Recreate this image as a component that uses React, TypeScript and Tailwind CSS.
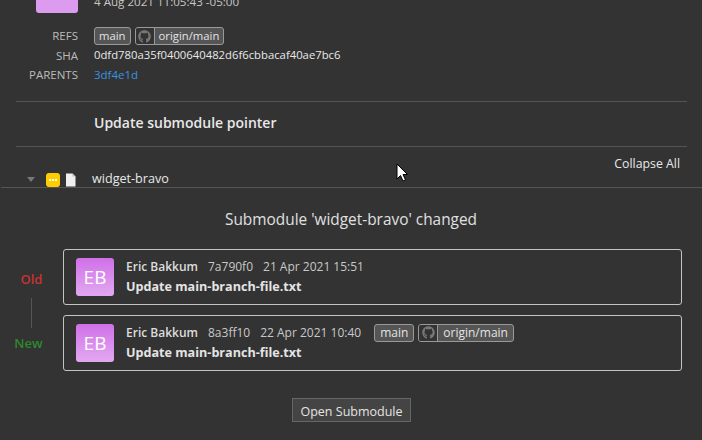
import { FaGithub } from "react-icons/fa"

function Ref({ name, remote, large }: { name: string; remote?: boolean; large?: boolean }) {
	return (
		<span
			className={
				large
					? "flex h-[18px] items-center overflow-hidden rounded-[3px] border border-[#999] bg-[#555] text-[12px] text-[#e4e4e4]"
					: "flex h-[18px] items-center overflow-hidden rounded-[3px] border border-[#999] bg-[#555] text-[11.3px] text-[#e4e4e4]"
			}
		>
			{remote && (
				<span className="flex h-full w-[19px] items-center justify-center border-r border-[#999] bg-[#333]">
					<FaGithub className="size-[13px] text-[#777]" />
				</span>
			)}
			<span className={large ? "px-[5px]" : "px-[4px]"}>{name}</span>
		</span>
	)
}

function CommitCard({ sha, date, refs }: { sha: string; date: string; refs?: boolean }) {
	return (
		<div className="flex h-[56px] items-center gap-3 rounded-[3px] border border-[#c4c4c4] pl-3">
			<div className="flex size-[38px] items-center justify-center rounded-[3px] bg-gradient-to-b from-[#d06fe8] to-[#e2a8f0] text-[19px] text-white">
				EB
			</div>
			<div className="flex flex-col gap-[2px]">
				<div className="flex h-[18px] items-center text-[11.5px] text-[#c8c8c8]">
					<span className="w-[82px] text-[12px] font-semibold text-[#ddd]">Eric Bakkum</span>
					<span className="mr-[10px] text-[12px]">{sha}</span>
					<span className="mr-[13px] text-[12px] font-medium">{date}</span>
					{refs && (
						<div className="flex gap-[4px]">
							<Ref name="main" large />
							<Ref name="origin/main" remote large />
						</div>
					)}
				</div>
				<div className="text-[12.6px] font-bold text-[#e4e4e4]">Update main-branch-file.txt</div>
			</div>
		</div>
	)
}

export default function App() {
	return (
		<div className="relative h-[440px] w-[702px] overflow-hidden bg-[#333] font-['Open_Sans',sans-serif] text-[#e8e8e8]">
			<div className="flex h-[187px] flex-col">
				<div className="flex h-[26px] pl-9">
					<div className="mt-[-29px] h-[42px] w-[42px] rounded-[3px] bg-[#dd9bf0]" />
					<div className="ml-4 mt-[-7px] text-[11.6px] text-[#c8c8c8]">4 Aug 2021 11:05:43 -05:00</div>
				</div>
				<div className="grid grid-cols-[78px_1fr] items-center gap-x-4 text-[11.5px]">
					<div className="flex h-5 items-center justify-end text-[#bbb]">REFS</div>
					<div className="flex h-5 items-center gap-[4px]">
						<Ref name="main" />
						<Ref name="origin/main" remote />
					</div>
					<div className="flex h-5 items-center justify-end pb-[1px] text-[#bbb]">SHA</div>
					<div className="flex h-5 items-center pb-[1px] text-[11.3px]">0dfd780a35f0400640482d6f6cbbacaf40ae7bc6</div>
					<div className="flex h-5 items-center justify-end pb-[2px] text-[#bbb]">PARENTS</div>
					<div className="flex h-5 items-center pb-[2px] text-[#3794e0]">3df4e1d</div>
				</div>
				<div className="mx-4 mt-[15px] w-[671px] border-t border-[#555]" />
				<div className="flex h-[44px] items-center pb-[3px] pl-[94px] text-[14px] font-semibold text-[#e8e8e8]">
					Update submodule pointer
				</div>
				<div className="mx-4 w-[671px] border-t border-[#555]" />
				<div className="flex justify-end pr-[22px] pt-[9px] text-[12.3px] leading-4">Collapse All</div>
				<div className="flex h-[15px] items-center pl-[27px] text-[12.6px]">
					<span className="h-0 w-0 border-x-[4px] border-t-[5px] border-x-transparent border-t-[#777]" />
					<span className="ml-[11px] flex h-[14px] w-[14px] items-center justify-center gap-[1px] rounded-[3px] bg-[#ffcc00]">
						<span className="size-[2px] bg-white" />
						<span className="size-[2px] bg-white" />
						<span className="size-[2px] bg-white" />
					</span>
					<svg viewBox="0 0 11 14" className="ml-[5px] h-[14px] w-[11px]">
						<path d="M1 0.5H7.5L10.5 3.5V13.5H1Z" fill="#f0f0f0" />
						<path d="M7.5 0.5V3.5H10.5" fill="#bbb" />
					</svg>
					<span className="ml-4">widget-bravo</span>
				</div>
			</div>
			<div className="ml-px border-t border-[#555]" />

			<div className="flex h-[61px] items-center justify-center pt-[2px] text-[15.4px] text-[#e0e0e0]">
				Submodule 'widget-bravo' changed
			</div>

			<div className="flex pr-5">
				<div className="flex w-[63px] flex-col items-center pt-[21px] text-[13px] font-semibold leading-[18px]">
					<span className="text-[#c63232]">Old</span>
					<span className="mb-[6px] mt-[10px] h-[30px] w-px bg-[#555]" />
					<span className="mr-[6px] text-[#2b8a2b]">New</span>
				</div>
				<div className="flex flex-1 flex-col gap-[10px]">
					<CommitCard sha="7a790f0" date="21 Apr 2021 15:51" />
					<CommitCard sha="8a3ff10" date="22 Apr 2021 10:40" refs />
				</div>
			</div>

			<div className="mt-[27px] flex justify-center">
				<button className="ml-[1px] h-[24px] w-[119px] border border-[#666] bg-[#444] pt-[4px] text-[12.5px] text-[#e4e4e4]">
					Open Submodule
				</button>
			</div>

			<svg viewBox="0 0 12 19" className="absolute left-[396px] top-[163px] h-[19px] w-[12px]">
				<path d="M1 1V16L4.5 12.5L7 18L9.5 17L7 11.5H11.5Z" fill="#fff" stroke="#000" strokeWidth="1" />
			</svg>
		</div>
	)
}
